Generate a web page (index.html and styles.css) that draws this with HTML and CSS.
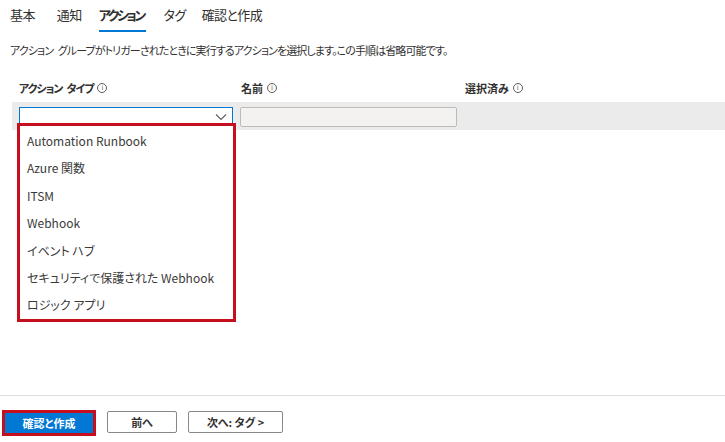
FILE: index.html
```html
<!DOCTYPE html>
<html lang="ja">
<head>
<meta charset="utf-8">
<link rel="stylesheet" href="styles.css">
</head>
<body>
<div class="page">
  <nav class="tabs">
    <span class="tab">基本</span>
    <span class="tab">通知</span>
    <span class="tab active">アクション</span>
    <span class="tab">タグ</span>
    <span class="tab">確認と作成</span>
  </nav>
  <p class="desc">アクション グループがトリガーされたときに実行するアクションを選択します。この手順は省略可能です。</p>
  <div class="head">
    <div class="col c1"><span>アクション タイプ</span><span class="info">i</span></div>
    <div class="col c2"><span>名前</span><span class="info">i</span></div>
    <div class="col c3"><span>選択済み</span><span class="info">i</span></div>
  </div>
  <div class="row">
    <div class="select">
      <svg class="chev" width="12" height="8" viewBox="0 0 12 8"><path d="M1 1.5 L6 6.5 L11 1.5" fill="none" stroke="#605e5c" stroke-width="1.1"/></svg>
      <ul class="menu">
        <li>Automation Runbook</li>
        <li>Azure 関数</li>
        <li>ITSM</li>
        <li>Webhook</li>
        <li>イベント ハブ</li>
        <li>セキュリティで保護された Webhook</li>
        <li>ロジック アプリ</li>
      </ul>
    </div>
    <div class="name"></div>
  </div>
  <footer class="footer">
    <span class="primary-wrap"><button class="btn primary">確認と作成</button></span>
    <button class="btn">前へ</button>
    <button class="btn next">次へ: タグ &gt;</button>
  </footer>
</div>
</body>
</html>
```
FILE: styles.css
```css
* { box-sizing: border-box; }
html, body { margin: 0; padding: 0; background: #fff; }
body {
  font-family: "Noto Sans CJK JP", "Noto Sans", sans-serif;
  font-feature-settings: "palt";
  color: #323130;
  width: 725px;
  height: 442px;
  overflow: hidden;
}
.page {
  height: 442px;
  display: flex;
  flex-direction: column;
}
.tabs {
  display: flex;
  padding: 5px 0 0 10px;
  height: 32px;
  font-size: 13px;
}
.tab {
  height: 27px;
  line-height: 20px;
  color: #323130;
  letter-spacing: -0.6px;
  white-space: nowrap;
}
.tab:nth-child(1) { margin-right: 22px; }
.tab:nth-child(2) { margin-right: 17px; }
.tab:nth-child(3) { margin-right: 18px; }
.tab:nth-child(4) { margin-right: 16px; }
.tab.active {
  font-weight: 600;
  border-bottom: 2px solid #0078d4;
  letter-spacing: -2.5px;
  padding-right: 2px;
}
.desc {
  margin: 10px 0 0 10px;
  font-size: 11px;
  line-height: 16px;
  letter-spacing: -0.9px;
  word-spacing: 3px;
}
.head {
  display: flex;
  margin-top: 22px;
  padding-left: 19px;
  font-size: 11px;
  font-weight: 700;
  height: 16px;
  line-height: 16px;
}
.col { display: flex; align-items: center; gap: 4px; white-space: pre; }
.c1 { width: 222px; letter-spacing: -1.1px; word-spacing: 3px; }
.c2 { width: 224px; }
.info {
  display: inline-flex;
  width: 10px;
  height: 10px;
  border: 1px solid #605e5c;
  border-radius: 50%;
  font-size: 7px;
  font-weight: 400;
  align-items: center;
  justify-content: center;
  line-height: 1;
  letter-spacing: 0;
  word-spacing: 0;
  color: #605e5c;
  font-family: "DejaVu Sans", sans-serif;
}
.row {
  margin: 6px 0 0 12px;
  height: 28px;
  background: #ebebeb;
  display: flex;
  align-items: flex-start;
  padding: 5px 0 0 7px;
  gap: 7px;
}
.select {
  position: relative;
  width: 214px;
  height: 19px;
  background: #fff;
  border: 1px solid #0078d4;
}
.chev { position: absolute; right: 5px; top: 5px; }
.menu {
  position: absolute;
  left: -3px;
  top: 15px;
  width: 219px;
  height: 199px;
  margin: 0;
  padding: 1px 0 0 7px;
  list-style: none;
  background: #fff;
  border: 3px solid #c50f1f;
  font-size: 12px;
  font-weight: 400;
  z-index: 2;
}
.menu li {
  height: 27.4px;
  line-height: 27.4px;
  color: #3b3a39;
  white-space: nowrap;
}
.name {
  width: 217px;
  height: 20px;
  background: #f3f2f1;
  border: 1px solid #bdbbb8;
  border-radius: 2px;
}
.footer {
  margin-top: auto;
  height: 47px;
  border-top: 1px solid #e1dfdd;
  display: flex;
  align-items: flex-start;
  padding: 14px 0 0 2px;
  gap: 11px;
}
.primary-wrap {
  display: block;
  border: 3px solid #c50f1f;
}
.btn {
  font-family: inherit;
  font-feature-settings: "palt";
  font-size: 11px;
  font-weight: 700;
  height: 22px;
  background: #fff;
  border: 1px solid #8a8886;
  border-radius: 2px;
  color: #323130;
  padding: 0;
  margin-top: 1px;
  white-space: pre;
}
.btn.primary {
  display: block;
  margin: 0;
  width: 88px;
  height: 20px;
  background: #0078d4;
  border: none;
  border-radius: 0;
  color: #fff;
}
.btn:not(.primary) { width: 70px; }
.btn.next { width: 95px; }
```
